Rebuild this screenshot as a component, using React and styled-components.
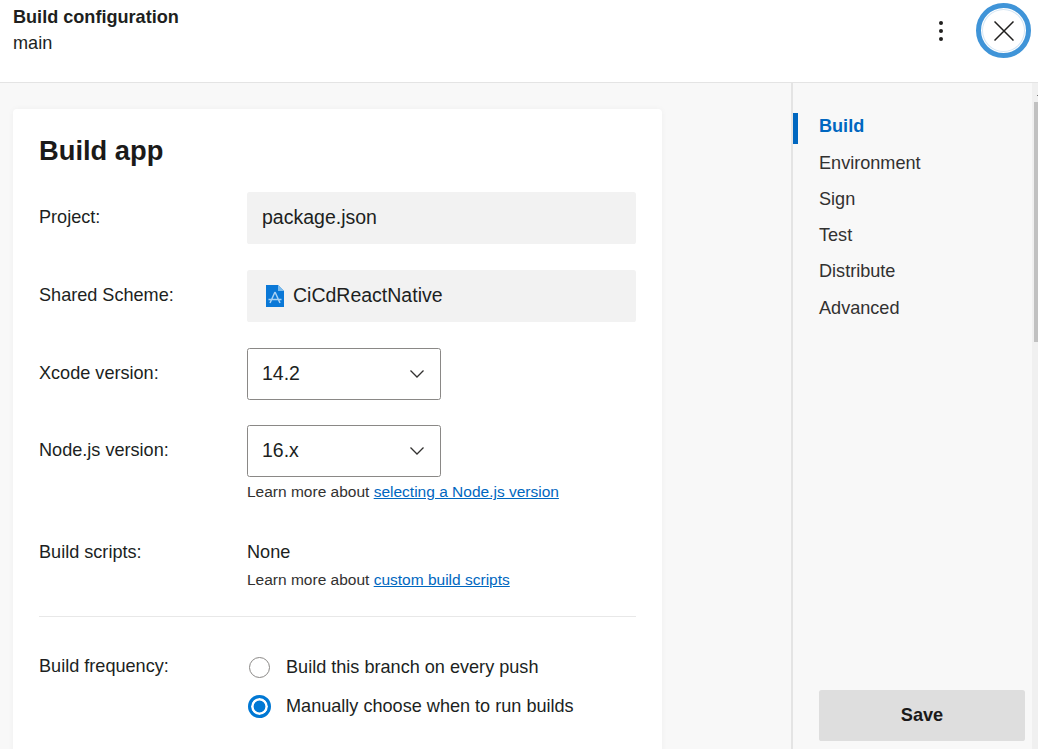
import styled, { createGlobalStyle } from 'styled-components';

const GlobalStyle = createGlobalStyle`
	html, body {
		margin: 0;
		padding: 0;
		height: 100%;
		overflow: hidden;
		background: #f8f8f8;
	}
	* {
		box-sizing: border-box;
	}
`;

const Page = styled.div`
	width: 1038px;
	height: 749px;
	display: flex;
	flex-direction: column;
	overflow: hidden;
	font-family: 'Liberation Sans', Arial, sans-serif;
	font-size: 18.1px;
	color: #201f1e;
`;

const Header = styled.header`
	flex: 0 0 83px;
	display: flex;
	align-items: flex-start;
	justify-content: space-between;
	background: #fff;
	border-bottom: 1px solid #e4e4e4;
	padding: 3px 7px 0 13px;
`;

const HeaderTitles = styled.div`
	padding-top: 4px;
`;

const HeaderTitle = styled.div`
	font-weight: 700;
	line-height: 20px;
	color: #201f1e;
`;

const HeaderSubtitle = styled.div`
	line-height: 20px;
	margin-top: 6px;
`;

const HeaderActions = styled.div`
	display: flex;
	align-items: center;
	gap: 26px;
`;

const MoreButton = styled.button`
	width: 18px;
	height: 55px;
	padding: 0;
	border: 0;
	background: none;
	display: flex;
	align-items: center;
	justify-content: center;
`;

const CloseButton = styled.button`
	width: 55px;
	height: 55px;
	padding: 0;
	border: 5px solid #3f94d8;
	border-radius: 50%;
	background: #fff;
	display: flex;
	align-items: center;
	justify-content: center;
	box-shadow: inset 0 0 0 1px #fff, inset 0 0 0 2px #d5e6f4;
`;

const Body = styled.div`
	flex: 1;
	min-height: 0;
	display: flex;
`;

const Main = styled.main`
	flex: 0 0 791px;
	padding: 26px 0 0 13px;
	background: #f8f8f8;
	overflow: hidden;
`;

const Card = styled.section`
	width: 649px;
	height: 660px;
	padding: 24px 26px 0;
	background: #fff;
	border-radius: 4px;
	box-shadow: 0 0 6px rgba(0, 0, 0, 0.04);
`;

const CardTitle = styled.h1`
	margin: 0 0 23px;
	font-size: 27.3px;
	line-height: 36px;
	font-weight: 700;
	color: #1b1a19;
`;

const Row = styled.div`
	display: grid;
	grid-template-columns: 208px 389px;
	margin-bottom: ${props => props.gap}px;
`;

const Label = styled.div`
	line-height: 50px;
`;

const ReadOnly = styled.div`
	height: 52px;
	padding: 0 15px 2px;
	display: flex;
	align-items: center;
	gap: 9px;
	font-size: 19.5px;
	background: #f2f2f2;
	border-radius: 2.6px;
`;

const Select = styled.div`
	width: 194px;
	height: 52px;
	padding: 0 15px 0 14px;
	display: flex;
	align-items: center;
	justify-content: space-between;
	font-size: 19.5px;
	background: #fff;
	border: 1px solid #8a8886;
	border-radius: 2.6px;
`;

const SelectValue = styled.span`
	margin-top: -2px;
`;

const IconSlot = styled.span`
	display: flex;
	margin: 2px 0 0 4px;
`;

const Hint = styled.div`
	margin-top: 6px;
	font-size: 15.5px;
	line-height: 18px;
	color: #323130;
`;

const HintLink = styled.a`
	color: #0067c0;
	text-decoration: underline;
`;

const PlainValue = styled.div`
	line-height: 22px;
	margin-bottom: 8px;
`;

const ScriptsLabel = styled.div`
	line-height: 22px;
`;

const PlainHint = styled(Hint)`
	margin-top: 0;
`;

const Divider = styled.hr`
	margin: 0 0 37px;
	border: 0;
	border-top: 1px solid #e8e8e8;
`;

const FrequencyLabel = styled.div`
	line-height: 24px;
`;

const RadioList = styled.div`
	display: flex;
	flex-direction: column;
	gap: 15px;
	margin-top: 1px;
`;

const RadioRow = styled.label`
	display: flex;
	align-items: center;
	gap: 15px;
	height: 24px;
`;

const RadioBox = styled.span`
	flex: 0 0 24px;
	height: 24px;
	display: flex;
	align-items: center;
	justify-content: center;
`;

const RadioMark = styled.span`
	width: ${props => props.checked ? '23px' : '21px'};
	height: ${props => props.checked ? '23px' : '21px'};
	border-radius: 50%;
	background: ${props => props.checked ? '#0078d4' : '#fff'};
	border: ${props => props.checked ? '3px solid #0078d4' : '1.5px solid #8a8886'};
	box-shadow: ${props => props.checked ? 'inset 0 0 0 2.6px #fff' : 'none'};
`;

const Aside = styled.aside`
	flex: 0 0 241px;
	display: flex;
	flex-direction: column;
	justify-content: space-between;
	padding: 30px 0 8px;
	background: #f8f8f8;
	border-left: 2px solid #e4e4e4;
`;

const Nav = styled.nav`
	display: flex;
	flex-direction: column;
`;

const NavItem = styled.a`
	padding-left: ${props => props.active ? '21px' : '26px'};
	font-weight: ${props => props.active ? 700 : 400};
	color: ${props => props.active ? '#0067c0' : '#323130'};
	border-left: ${props => props.active ? '5px solid #0067c0' : '0'};
	height: ${props => props.active ? '31px' : '36.15px'};
	margin-bottom: ${props => props.active ? '1px' : '0'};
	line-height: ${props => props.active ? '27px' : '36px'};
`;

const SaveButton = styled.button`
	width: 206px;
	height: 51px;
	margin-left: 26px;
	border: 0;
	border-radius: 2.6px;
	background: #dedede;
	font-family: inherit;
	font-size: 18.2px;
	font-weight: 700;
	color: #1b1a19;
`;

const ScrollTrack = styled.div`
	flex: 0 0 6px;
	background: #f0f0f0;
`;

const ScrollArrow = styled.div`
	width: 1px;
	height: 1px;
	margin: 12px 0 0 5px;
	background: #777;
`;

const ScrollThumb = styled.div`
	height: 240px;
	margin: 6px 0 0 2px;
	background: #c1c1c1;
`;

const AppFileIcon = () => (
	<svg width="18" height="22" viewBox="0 0 18 22">
		<path d="M0 0h12l6 6v16H0z" fill="#0a78d7" />
		<path d="M12 0l6 6h-6z" fill="#7dbcec" />
		<path d="M9 7l-5 11M9 7l5 11M2.500 14.500h13" stroke="#a9d2f3" strokeWidth="1.500" fill="none" />
	</svg>
);

const Chevron = () => (
	<svg width="16" height="16" viewBox="0 0 16 16">
		<path d="M1.500 4.500L8 11l6.500-6.500" stroke="#323130" strokeWidth="1.300" fill="none" />
	</svg>
);

const navItems = ['Environment', 'Sign', 'Test', 'Distribute', 'Advanced'];

const App = () => (
	<Page>
		<GlobalStyle />
		<Header>
			<HeaderTitles>
				<HeaderTitle>Build configuration</HeaderTitle>
				<HeaderSubtitle>main</HeaderSubtitle>
			</HeaderTitles>
			<HeaderActions>
				<MoreButton aria-label="More">
					<svg width="4" height="20" viewBox="0 0 4 20">
						<circle cx="2" cy="2" r="2" fill="#201f1e" />
						<circle cx="2" cy="10" r="2" fill="#201f1e" />
						<circle cx="2" cy="18" r="2" fill="#201f1e" />
					</svg>
				</MoreButton>
				<CloseButton aria-label="Close">
					<svg width="20" height="20" viewBox="0 0 20 20">
						<path d="M0.500 0.500L19.500 19.500M19.500 0.500L0.500 19.500" stroke="#201f1e" strokeWidth="1.500" />
					</svg>
				</CloseButton>
			</HeaderActions>
		</Header>
		<Body>
			<Main>
				<Card>
					<CardTitle>Build app</CardTitle>
					<Row gap={26}>
						<Label>Project:</Label>
						<ReadOnly>package.json</ReadOnly>
					</Row>
					<Row gap={26}>
						<Label>Shared Scheme:</Label>
						<ReadOnly>
							<IconSlot><AppFileIcon /></IconSlot>
							CiCdReactNative
						</ReadOnly>
					</Row>
					<Row gap={25}>
						<Label>Xcode version:</Label>
						<Select><SelectValue>14.2</SelectValue><Chevron /></Select>
					</Row>
					<Row gap={40}>
						<Label>Node.js version:</Label>
						<div>
							<Select><SelectValue>16.x</SelectValue><Chevron /></Select>
							<Hint>Learn more about <HintLink href="#">selecting a Node.js version</HintLink></Hint>
						</div>
					</Row>
					<Row gap={27}>
						<ScriptsLabel>Build scripts:</ScriptsLabel>
						<div>
							<PlainValue>None</PlainValue>
							<PlainHint>Learn more about <HintLink href="#">custom build scripts</HintLink></PlainHint>
						</div>
					</Row>
					<Divider />
					<Row gap={0}>
						<FrequencyLabel>Build frequency:</FrequencyLabel>
						<RadioList>
							<RadioRow><RadioBox><RadioMark /></RadioBox>Build this branch on every push</RadioRow>
							<RadioRow><RadioBox><RadioMark checked /></RadioBox>Manually choose when to run builds</RadioRow>
						</RadioList>
					</Row>
				</Card>
			</Main>
			<Aside>
				<Nav>
					<NavItem active>Build</NavItem>
					{navItems.map(item => <NavItem key={item}>{item}</NavItem>)}
				</Nav>
				<SaveButton>Save</SaveButton>
			</Aside>
			<ScrollTrack>
				<ScrollArrow />
				<ScrollThumb />
			</ScrollTrack>
		</Body>
	</Page>
);

export default App;
